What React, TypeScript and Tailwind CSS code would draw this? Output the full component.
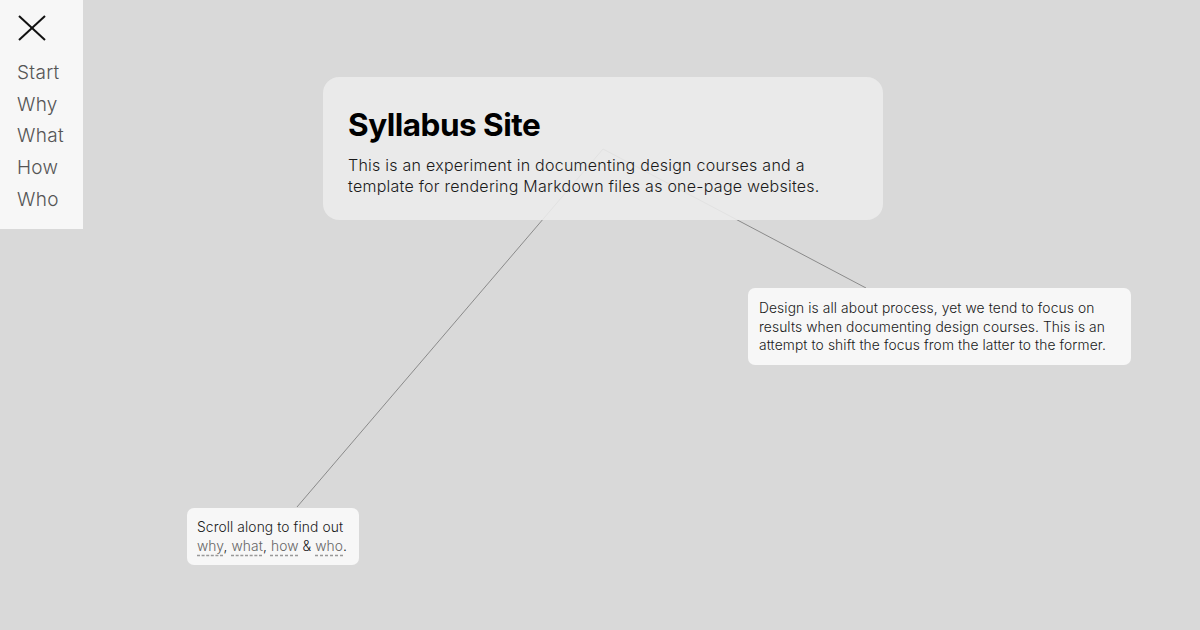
import React from "react";

const font = { fontFamily: "Inter, 'Noto Sans', sans-serif" };

export default function App() {
  return (
    <div className="relative w-[1200px] h-[630px] overflow-hidden bg-[#d9d9d9]" style={font}>
      <svg className="absolute inset-0" width="1200" height="630">
        <line x1="603" y1="149" x2="297" y2="507" stroke="#8a8a8a" strokeWidth="1" />
        <line x1="603" y1="149" x2="866" y2="288" stroke="#8a8a8a" strokeWidth="1" />
      </svg>

      <nav className="absolute left-0 top-0 w-[83px] h-[229px] bg-[#f7f7f7] pl-[17px] pt-[15px]">
        <svg width="30" height="26" viewBox="0 0 30 26" className="ml-[1px]">
          <line x1="1" y1="1" x2="27" y2="25" stroke="#111" strokeWidth="2" />
          <line x1="27" y1="1" x2="1" y2="25" stroke="#111" strokeWidth="2" />
        </svg>
        <ul className="mt-[16px] flex flex-col text-[19px] leading-[31.7px] text-[#555] font-light tracking-[0.3px]">
          <li>Start</li>
          <li>Why</li>
          <li>What</li>
          <li>How</li>
          <li>Who</li>
        </ul>
      </nav>

      <div className="absolute left-[323px] top-[77px] w-[560px] h-[143px] rounded-[16px] bg-[#ebebeb]/90 px-[25px] pt-[27px]">
        <h1 className="text-[31.5px] leading-[42px] font-bold tracking-[-0.5px] text-black">Syllabus Site</h1>
        <p className="mt-[9px] text-[16px] leading-[21px] text-[#1a1a1a] font-light tracking-[0.25px]">
          This is an experiment in documenting design courses and a
          <br />
          template for rendering Markdown files as one-page websites.
        </p>
      </div>

      <div className="absolute left-[748px] top-[288px] w-[383px] h-[77px] rounded-[7px] bg-[#f7f7f7] px-[11px] pt-[11px]">
        <p className="text-[13.8px] leading-[18.6px] text-[#1a1a1a] font-light tracking-[0.1px]">
          Design is all about process, yet we tend to focus on results when documenting design courses. This is an attempt to shift the focus from the latter to the former.
        </p>
      </div>

      <div className="absolute left-[187px] top-[508px] w-[172px] h-[57px] rounded-[7px] bg-[#f7f7f7] px-[10px] pt-[10px]">
        <p className="text-[13.8px] leading-[19px] text-[#1a1a1a] font-light tracking-[0.1px]">
          Scroll along to find out
          <br />
          <span className="text-[#666] underline decoration-dashed decoration-[#999] underline-offset-[4px]">why</span>,{" "}
          <span className="text-[#666] underline decoration-dashed decoration-[#999] underline-offset-[4px]">what</span>,{" "}
          <span className="text-[#666] underline decoration-dashed decoration-[#999] underline-offset-[4px]">how</span> &amp;{" "}
          <span className="text-[#666] underline decoration-dashed decoration-[#999] underline-offset-[4px]">who</span>.
        </p>
      </div>
    </div>
  );
}
